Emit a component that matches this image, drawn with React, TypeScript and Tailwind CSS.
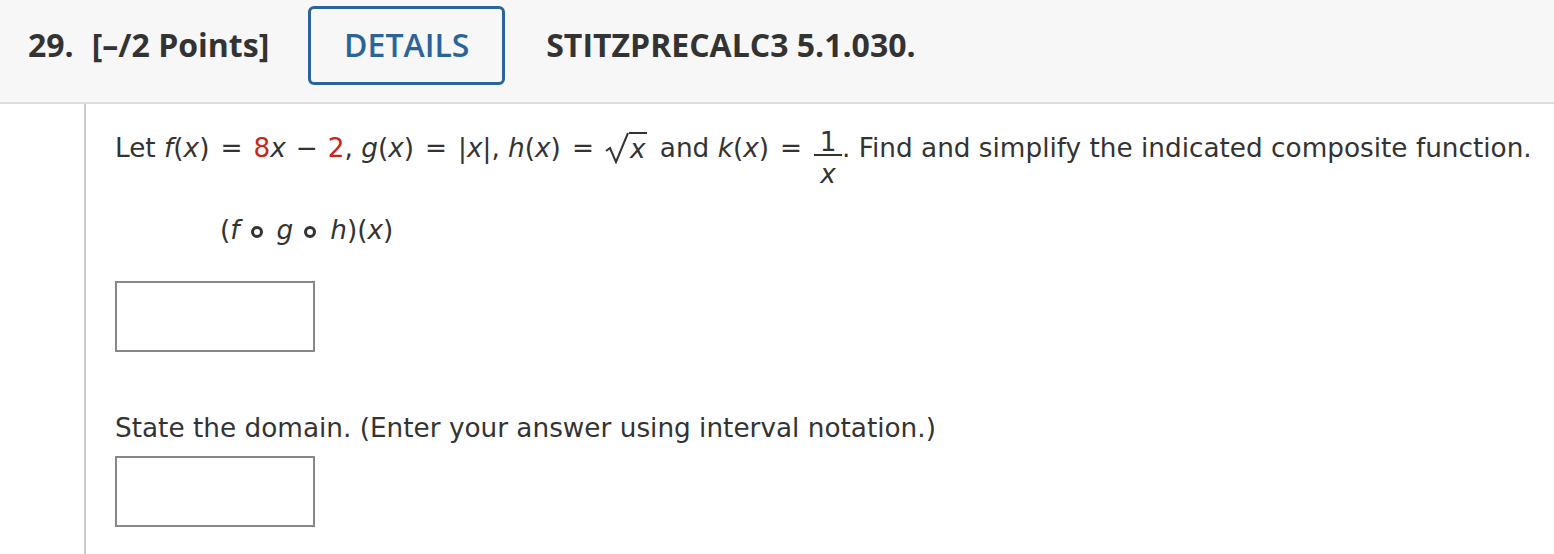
import React from "react";

const I = ({ children }: { children: React.ReactNode }) => <i className="italic">{children}</i>;
const R = ({ children }: { children: React.ReactNode }) => <span className="text-[#c9261a]">{children}</span>;
const Eq = () => <span className="mx-[11px]">=</span>;
const Ring = () => (
  <span className="inline-block ml-[11px] mr-[14px] w-[12px] h-[12px] rounded-full border-[3px] border-[#333333] translate-y-[1px]"></span>
);

export default function App() {
  return (
    <div className="w-[1554px] h-[554px] bg-white overflow-hidden">
      <div className="h-[104px] pb-[12px] bg-[#f7f7f7] border-b-2 border-[#dddddd] flex items-center pl-[28px] text-[#333333] font-bold text-[32px] [font-family:'Open_Sans',sans-serif]">
        <span>29.</span>
        <span className="ml-[18px]">[–/2 Points]</span>
        <div className="ml-[39px] w-[197px] h-[79px] border-[3px] border-[#2b6499] rounded-[6px] flex items-center justify-center text-[#2b6499] font-semibold">
          DETAILS
        </div>
        <span className="ml-[41px]">STITZPRECALC3 5.1.030.</span>
      </div>
      <div className="ml-[84px] border-l-2 border-[#cccccc] h-[450px] pl-[29px] text-[#333333] text-[26.3px] flex flex-col [font-family:'DejaVu_Sans',Verdana,sans-serif]">
        <div className="mt-[15px] h-[60px] flex items-center whitespace-pre">
          <span>Let </span>
          <I>f</I>(<I>x</I>)<Eq /><R>8</R><I>x</I><span className="mx-[10px]">−</span><R>2</R>, <I>g</I>(<I>x</I>)<Eq />|<I>x</I>|, <I>h</I>(<I>x</I>)<Eq />
          <span className="inline-flex items-start -translate-y-[1px]">
            <svg width="24" height="32" viewBox="0 0 24 32" className="shrink-0">
              <path d="M1 19 L5 16 L11 30 L23 1" fill="none" stroke="#333333" strokeWidth="2" strokeLinejoin="miter" />
            </svg>
            <span className="border-t-2 border-[#333333] leading-[30px] pr-[2px] pl-[1px]"><I>x</I></span>
          </span>
          <span className="ml-[4px]"> and </span>
          <I>k</I>(<I>x</I>)<Eq />
          <span className="inline-flex flex-col items-center translate-y-[9px] ml-[1px]">
            <span className="leading-[22px]">1</span>
            <span className="w-[28px] h-[2px] bg-[#333333] mt-[1px]"></span>
            <span className="leading-[22px] mt-[7px]"><I>x</I></span>
          </span>
          <span>. Find and simplify the indicated composite function.</span>
        </div>
        <div className="pl-[105px] mt-[32px] h-[40px] flex items-center whitespace-pre">
          (<I>f</I><Ring /><I>g</I><Ring /><I>h</I>)(<I>x</I>)
        </div>
        <div className="mt-[30px] w-[200px] h-[71px] shrink-0 border-2 border-[#888888]"></div>
        <div className="mt-[57px] h-[40px] flex items-center whitespace-pre">State the domain. (Enter your answer using interval notation.)</div>
        <div className="mt-[7px] w-[200px] h-[71px] shrink-0 border-2 border-[#888888]"></div>
      </div>
    </div>
  );
}
